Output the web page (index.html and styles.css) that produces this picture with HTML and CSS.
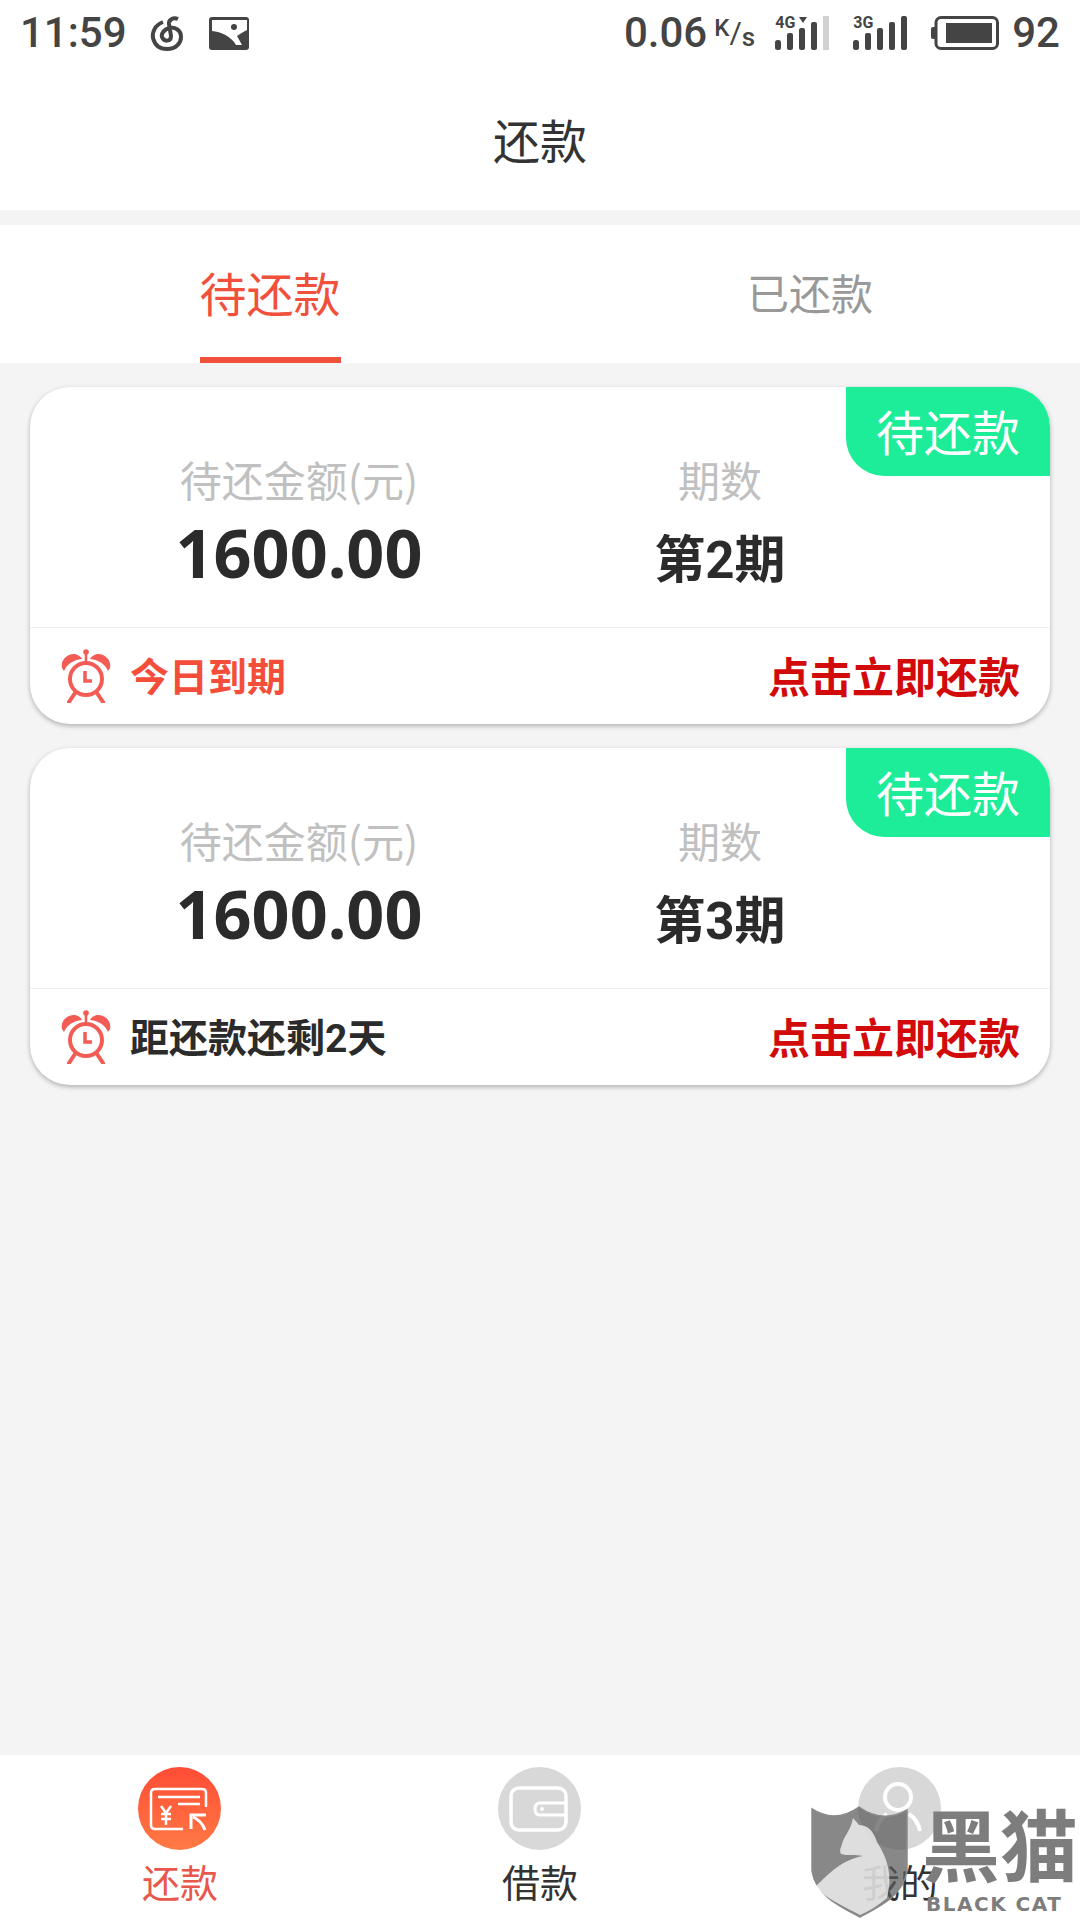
FILE: index.html
```html
<!DOCTYPE html>
<html>
  <head>
    <title>还款</title>
    <link rel="stylesheet" href="styles.css">
  </head>
  <body>
    <svg class="defs" width="0" height="0">
      <symbol id="alarm" viewBox="0 0 50 54">
        <path d="M1 19C-1 10 8 4 14 5C18 6 20 8 21 10C12 11 6 15 3 22Z" fill="#f25c55"/>
        <path d="M49 19C51 10 42 4 36 5C32 6 30 8 29 10C38 11 44 15 47 22Z" fill="#f25c55"/>
        <circle cx="25" cy="3" r="2.8" fill="#f25c55"/>
        <path d="M25 4V12" stroke="#f25c55" stroke-width="2.5"/>
        <circle cx="25" cy="30" r="16" fill="none" stroke="#f25c55" stroke-width="4"/>
        <path d="M14 44L8 53M36 44L42 53" stroke="#f25c55" stroke-width="4" stroke-linecap="round"/>
        <path d="M24 22V32H31" fill="none" stroke="#f25c55" stroke-width="3.5"/>
      </symbol>
      <symbol id="bars" viewBox="0 0 54 34">
        <rect x="0" y="24" width="6" height="10" rx="2.5"/>
        <rect x="12" y="17" width="6" height="17" rx="2"/>
        <rect x="24" y="12" width="6" height="22" rx="2"/>
        <rect x="36" y="6" width="6" height="28" rx="2"/>
      </symbol>
      <linearGradient id="repayFill" x1="0" y1="0" x2="0" y2="1">
        <stop offset="0" stop-color="#ff4c35"/>
        <stop offset="1" stop-color="#ff7a45"/>
      </linearGradient>
    </svg>

    <div class="phone">
      <div class="statusbar">
        <div class="status-left">
          <span class="clock">11:59</span>
          <svg class="icon-music" width="34" height="36" viewBox="0 0 34 36">
            <path d="M13 7C5 10 2 17 3 23C5 31 11 34 17 34C26 34 31 28 31 22C31 15 25 12 20 13C14 14 11 19 12 22C14 27 21 27 21 21L19 9C18.500 5 23 2 28 4" fill="none" stroke="#444" stroke-width="4"/>
          </svg>
          <svg class="icon-photo" width="40" height="33" viewBox="0 0 40 33">
            <rect width="40" height="33" rx="3" fill="#444"/>
            <path d="M3 3H38V13C34 15 31 17 28 19L33 28H27C22 19 12 15 3 14Z" fill="#fff"/>
            <circle cx="25" cy="10" r="3" fill="#444"/>
          </svg>
        </div>
        <div class="status-right">
          <span class="speed">0.06</span>
          <span class="unit"><i class="unit-k">K</i><i class="unit-slash">/</i><i class="unit-s">s</i></span>
          <div class="signal signal-4g">
            <span class="net">4G</span>
            <svg class="net-down" width="8" height="6" viewBox="0 0 8 6"><path d="M0 0H8L4 6Z" fill="#444"/></svg>
            <svg class="bars" width="54" height="34"><use href="#bars" fill="#444"/><rect x="48" y="0" width="6" height="34" fill="#d0d0d0"/></svg>
          </div>
          <div class="signal signal-3g">
            <span class="net">3G</span>
            <svg class="bars" width="54" height="34"><use href="#bars" fill="#444"/><rect x="48" y="0" width="6" height="34" rx="2" fill="#444"/></svg>
          </div>
          <svg class="battery" width="68" height="34" viewBox="0 0 68 34">
            <rect x="0" y="11" width="5" height="12" rx="2" fill="#444"/>
            <rect x="5" y="1.500" width="61.500" height="31" rx="5" fill="none" stroke="#444" stroke-width="3"/>
            <rect x="15" y="7" width="46" height="20" fill="#444"/>
          </svg>
          <span class="level">92</span>
        </div>
      </div>

      <div class="titlebar">还款</div>

      <div class="tabs">
        <div class="tab active"><span>待还款</span></div>
        <div class="tab"><span>已还款</span></div>
      </div>

      <div class="list">
        <div class="card">
          <div class="tag">待还款</div>
          <div class="card-body">
            <div class="col">
              <div class="label">待还金额(元)</div>
              <div class="amount">1600.00</div>
            </div>
            <div class="col">
              <div class="label">期数</div>
              <div class="term">第2期</div>
            </div>
          </div>
          <div class="card-foot">
            <svg class="alarm" width="50" height="54"><use href="#alarm"/></svg>
            <span class="due due-today">今日到期</span>
            <span class="pay">点击立即还款</span>
          </div>
        </div>

        <div class="card">
          <div class="tag">待还款</div>
          <div class="card-body">
            <div class="col">
              <div class="label">待还金额(元)</div>
              <div class="amount">1600.00</div>
            </div>
            <div class="col">
              <div class="label">期数</div>
              <div class="term">第3期</div>
            </div>
          </div>
          <div class="card-foot">
            <svg class="alarm" width="50" height="54"><use href="#alarm"/></svg>
            <span class="due">距还款还剩2天</span>
            <span class="pay">点击立即还款</span>
          </div>
        </div>
      </div>

      <div class="nav">
        <div class="nav-item on">
          <svg width="83" height="83" viewBox="0 0 83 83">
            <circle cx="41.500" cy="41.500" r="41.500" fill="url(#repayFill)"/>
            <g fill="none" stroke="#fff" stroke-width="2.500">
              <path d="M45 62H17Q13 62 13 58V26Q13 22 17 22H64Q68 22 68 26V40"/>
              <path d="M20 30H62M40 37H62"/>
              <path d="M23 39L28 46L33 39M28 46V58M23 47H33M23 52H33"/>
              <path d="M53 62V48H68M55 50Q64 54 67 63" stroke-width="3"/>
            </g>
          </svg>
          <span>还款</span>
        </div>
        <div class="nav-item">
          <svg width="83" height="83" viewBox="0 0 83 83">
            <circle cx="41.500" cy="41.500" r="41.500" fill="#d8d8d8"/>
            <g fill="none" stroke="#fff" stroke-width="3.500">
              <rect x="13" y="21" width="55" height="42" rx="8"/>
              <path d="M68 36H42Q37 36 37 42Q37 48 42 48H68" stroke-width="3"/>
            </g>
            <circle cx="44" cy="42" r="2" fill="#fff"/>
          </svg>
          <span>借款</span>
        </div>
        <div class="nav-item">
          <svg width="83" height="83" viewBox="0 0 83 83">
            <circle cx="41.500" cy="41.500" r="41.500" fill="#d8d8d8"/>
            <circle cx="40" cy="30" r="13" fill="none" stroke="#fff" stroke-width="4"/>
            <path d="M29 47Q20 53 18 64M51 47Q60 53 62 64" fill="none" stroke="#fff" stroke-width="4"/>
          </svg>
          <span>我的</span>
        </div>
      </div>

      <div class="watermark">
        <svg class="wm-shield" width="97" height="112" viewBox="0 0 97 112">
          <path d="M1 3Q24 18 48 1Q72 18 96 4V65C92 90 68 101 49 111C30 101 5 90 1 65Z" fill="#5a5a5a" fill-opacity="0.72" stroke="#8a8a8a" stroke-width="1.500"/>
          <path d="M42 12L48 19C56 19 62 24 66 36C76 52 82 68 76 92C68 99 58 105 49 109C32 100 12 91 5 80C18 68 30 54 52 50C44 48 36 50 30 48C28 44 30 42 31 38C33 30 40 24 42 12Z" fill="#fff" fill-opacity="0.72"/>
        </svg>
        <div class="wm-name">黑猫</div>
        <div class="wm-en">BLACK CAT</div>
      </div>
    </div>
  </body>
</html>
```

FILE: styles.css
```css
body { margin: 0; font-family: "Noto Sans CJK SC", "Noto Sans", sans-serif; background: #f4f4f4; color: #2b2b2b; }

.defs { position: absolute; }

.phone { position: relative; width: 1080px; height: 1920px; display: flex; flex-direction: column; overflow: hidden; }

/* status bar */
.statusbar { height: 70px; background: #fff; display: flex; justify-content: space-between; align-items: center; padding: 0 20px 4px 20px; box-sizing: border-box; color: #444; font-family: Roboto, sans-serif; font-weight: 500; }
.status-left, .status-right { display: flex; align-items: center; }
.clock { font-size: 42px; line-height: 50px; }
.icon-music { margin-left: 23px; }
.icon-photo { margin-left: 25px; }
.speed { font-size: 42px; line-height: 50px; }
.unit { display: flex; width: 33px; height: 34px; margin: 0 4px 0 7px; font-size: 24px; line-height: 1; justify-content: space-between; }
.unit i { font-style: normal; }
.unit-k { align-self: flex-start; }
.unit-slash { align-self: center; font-weight: 400; font-size: 30px; }
.unit-s { align-self: flex-end; font-size: 26px; }
.signal { position: relative; width: 54px; height: 34px; margin-left: 24px; }
.signal .net { position: absolute; left: 0; top: 0; font-size: 16px; line-height: 14px; font-weight: 700; }
.net-down { position: absolute; left: 24px; top: 1px; }
.bars { display: block; }
.battery { margin-left: 24px; }
.level { font-size: 42px; line-height: 50px; margin-left: 13px; }

/* title */
.titlebar { height: 140px; background: #fff; text-align: center; line-height: 137px; font-size: 47px; color: #333; }

/* tabs */
.tabs { display: flex; height: 138px; margin-top: 15px; background: #fff; }
.tab { flex: 1; display: flex; justify-content: center; font-size: 42px; color: #999; }
.tab span { line-height: 133px; height: 138px; box-sizing: border-box; }
.tab.active { font-size: 47px; color: #f0503c; }
.tab.active span { border-bottom: 6px solid #f0503c; }

/* cards */
.list { flex: 1; padding: 24px 30px 0; display: flex; flex-direction: column; gap: 24px; }
.card { position: relative; height: 337px; background: #fff; border-radius: 40px; box-shadow: 0 2px 5px rgba(0, 0, 0, 0.28); overflow: hidden; }
.tag { position: absolute; right: 0; top: 0; width: 204px; height: 89px; background: #1ded99; color: #fff; border-bottom-left-radius: 38px; font-size: 48px; line-height: 86px; text-align: center; box-sizing: border-box; }
.card-body { height: 240px; display: grid; grid-template-columns: 538px 304px; box-sizing: border-box; padding-top: 67px; }
.col { text-align: center; }
.label { font-size: 42px; line-height: 50px; color: #c0c0c0; }
.amount { font-family: "Noto Sans", sans-serif; font-weight: 700; font-size: 66.500px; line-height: 76px; margin-top: 10px; }
.term { font-family: Roboto, "Noto Sans CJK SC", sans-serif; font-weight: 700; font-size: 51px; line-height: 76px; margin-top: 19px; }
.card-foot { height: 97px; border-top: 1px solid #eeeeee; box-sizing: border-box; display: flex; align-items: center; padding: 0 30px 0 31px; }
.alarm { flex: none; }
.due { font-family: Roboto, "Noto Sans CJK SC", sans-serif; font-weight: 700; font-size: 39px; margin: 0 0 4px 19px; color: #2b2b2b; }
.due-today { color: #f44e3b; }
.pay { margin: 0 0 4px auto; font-weight: 700; font-size: 42px; color: #d20a0a; }

/* bottom nav */
.nav { height: 165px; background: #fff; display: flex; padding-top: 12px; box-sizing: border-box; }
.nav-item { flex: 1; display: flex; flex-direction: column; align-items: center; font-size: 38px; color: #333; }
.nav-item svg { display: block; margin-right: 2px; }
.nav-item span { line-height: 54px; margin-top: 4px; }
.nav-item.on { color: #e8574c; }

/* watermark sits on top of the nav */
.watermark { position: absolute; left: 811px; top: 1806px; width: 269px; height: 114px; color: #7d7d7d; }
.wm-shield { position: absolute; left: 0; top: 0; }
.wm-name { position: absolute; left: 111px; top: -12px; font-size: 78px; font-weight: 700; line-height: 96px; white-space: nowrap; }
.wm-en { position: absolute; left: 115px; top: 86px; font-family: "DejaVu Sans", sans-serif; font-weight: 700; font-size: 20px; line-height: 24px; letter-spacing: 1.500px; white-space: nowrap; }
```
